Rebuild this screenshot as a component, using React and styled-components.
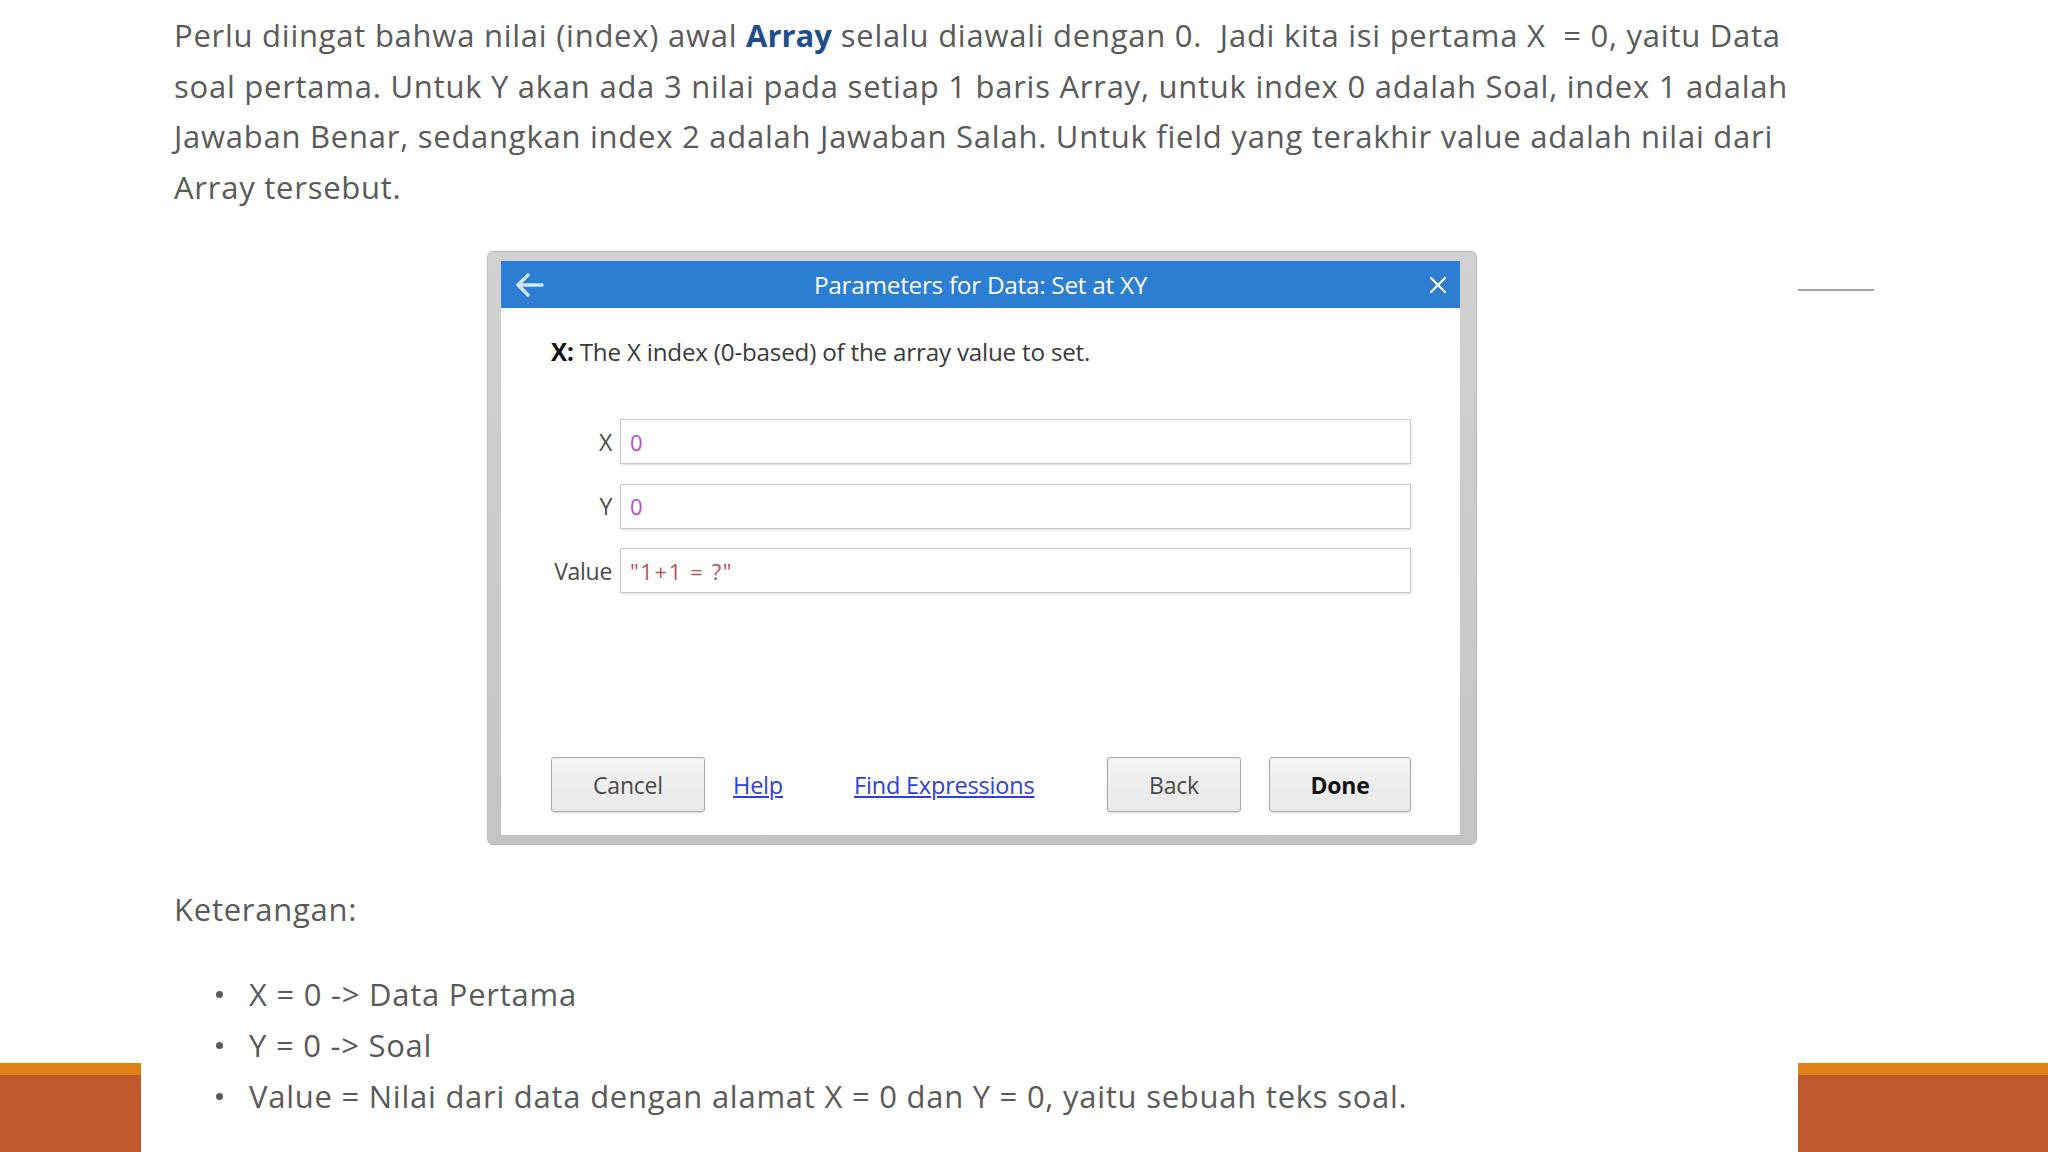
import React from "react";
import styled, { createGlobalStyle } from "styled-components";

const Global = createGlobalStyle`
  html, body { margin: 0; padding: 0; background: #ffffff; }
  * { box-sizing: border-box; }
`;

const Page = styled.div`
  position: relative;
  width: 2048px;
  height: 1152px;
  overflow: hidden;
  background: #ffffff;
  padding: 10px 0 0 174px;
  font-family: "Open Sans", "Noto Sans", sans-serif;
  color: #5a5a5a;
`;

const Paragraph = styled.p`
  margin: 0;
  font-size: 31px;
  letter-spacing: 0.75px;
  line-height: 50.5px;
  white-space: nowrap;
`;

const Strong = styled.b`
  color: #1f4f8a;
  font-weight: 700;
  letter-spacing: 0;
`;

const Frame = styled.div`
  margin: 39px 0 0 313px;
  width: 990px;
  height: 594px;
  padding: 9px 16px 9px 13px;
  background: linear-gradient(#d2d2d2, #c4c4c4);
  border: 1px solid #b8b8b8;
  border-radius: 6px;
  display: flex;
  font-family: "Open Sans", "Noto Sans", sans-serif;
`;

const Window = styled.div`
  flex: 1;
  display: flex;
  flex-direction: column;
  background: #ffffff;
`;

const TitleBar = styled.div`
  height: 47px;
  flex: none;
  background: #2b7ed1;
  display: grid;
  grid-template-columns: 60px 1fr 60px;
  align-items: center;
  color: #ffffff;
`;

const Title = styled.div`
  text-align: center;
  font-size: 24.4px;
  letter-spacing: -0.3px;
`;

const IconCell = styled.div`
  display: flex;
  justify-content: ${(p) => (p.$end ? "flex-end" : "flex-start")};
  padding: ${(p) => (p.$end ? "0 13px 0 0" : "0 0 0 15px")};
`;

const Body = styled.div`
  flex: 1;
  display: flex;
  flex-direction: column;
  padding: 28px 49px 23px 50px;
`;

const Description = styled.div`
  font-size: 24.2px;
  line-height: 32px;
  letter-spacing: -0.2px;
  color: #3a3a3a;
  b { color: #111; font-weight: 700; }
`;

const Fields = styled.div`
  margin-top: 51px;
  display: grid;
  grid-template-columns: 61px 1fr;
  column-gap: 8px;
  row-gap: 19.5px;
  align-items: center;
`;

const Label = styled.div`
  text-align: right;
  font-size: 23px;
  letter-spacing: -0.3px;
  color: #4a4a4a;
`;

const Input = styled.div`
  height: 45px;
  border: 1.5px solid #c9c9c9;
  box-shadow: 0 1px 2px rgba(0, 0, 0, 0.12);
  display: flex;
  align-items: center;
  padding-left: 9px;
  font-size: 22px;
  letter-spacing: 1.6px;
  color: ${(p) => p.$color};
`;

const Spacer = styled.div`
  flex: 1;
`;

const Actions = styled.div`
  display: flex;
  align-items: center;
`;

const Button = styled.button`
  height: 55px;
  width: ${(p) => p.$w}px;
  margin-left: ${(p) => p.$ml || "0"};
  background: linear-gradient(#f3f3f3, #e9e9e9);
  border: 1.5px solid #a9a9a9;
  border-radius: 3px;
  box-shadow: 0 1px 2px rgba(0, 0, 0, 0.15);
  font-family: "Open Sans", "Noto Sans", sans-serif;
  font-size: 23px;
  letter-spacing: -0.2px;
  font-weight: ${(p) => (p.$bold ? 700 : 400)};
  color: ${(p) => (p.$bold ? "#111" : "#4a4a4a")};
  padding: 0;
`;

const Link = styled.a`
  margin-left: ${(p) => p.$ml}px;
  font-size: 23.5px;
  letter-spacing: -0.2px;
  color: #3140d8;
  text-decoration: underline;
  cursor: pointer;
`;

const Subtitle = styled.p`
  margin: 38.5px 0 0;
  font-size: 31px;
  letter-spacing: 0.75px;
  line-height: 50.5px;
`;

const List = styled.ul`
  margin: 35px 0 0;
  padding: 0;
  list-style: none;
`;

const Item = styled.li`
  display: flex;
  align-items: center;
  font-size: 31px;
  letter-spacing: 0.75px;
  line-height: 51px;
  white-space: nowrap;
`;

const Dot = styled.span`
  width: 7px;
  height: 7px;
  border-radius: 50%;
  background: #5a5a5a;
  margin: 0 26px 0 42px;
  flex: none;
`;

const Rule = styled.div`
  position: absolute;
  left: 1798px;
  top: 289px;
  width: 76px;
  height: 2px;
  background: #a3a3a3;
`;

const Corner = styled.div`
  position: absolute;
  bottom: 0;
  ${(p) => (p.$right ? "right: 0; width: 250px;" : "left: 0; width: 141px;")}
  height: 89px;
  background: #bd592c;
  border-top: 12px solid #df8114;
`;

const BackArrow = () => (
  <svg width="28" height="24" viewBox="0 0 28 24" fill="none">
    <path d="M12 2 L2 12 L12 22 M2 12 H26" stroke="#d3e6f8" strokeWidth="3.5" strokeLinecap="round" strokeLinejoin="round" />
  </svg>
);

const CloseIcon = () => (
  <svg width="18" height="18" viewBox="0 0 18 18" fill="none">
    <path d="M2 2 L16 16 M16 2 L2 16" stroke="#ffffff" strokeWidth="2.2" strokeLinecap="round" />
  </svg>
);

export default function App() {
  return (
    <>
      <Global />
      <Page>
        <Paragraph>
          Perlu diingat bahwa nilai (index) awal <Strong>Array</Strong> selalu diawali dengan 0.&nbsp; Jadi kita isi pertama X&nbsp; = 0, yaitu Data
          <br />
          soal pertama. Untuk Y akan ada 3 nilai pada setiap 1 baris Array, untuk index 0 adalah Soal, index 1 adalah
          <br />
          Jawaban Benar, sedangkan index 2 adalah Jawaban Salah. Untuk field yang terakhir value adalah nilai dari
          <br />
          Array tersebut.
        </Paragraph>

        <Frame>
          <Window>
            <TitleBar>
              <IconCell>
                <BackArrow />
              </IconCell>
              <Title>Parameters for Data: Set at XY</Title>
              <IconCell $end>
                <CloseIcon />
              </IconCell>
            </TitleBar>
            <Body>
              <Description>
                <b>X:</b> The X index (0-based) of the array value to set.
              </Description>
              <Fields>
                <Label>X</Label>
                <Input $color="#b24fc6">0</Input>
                <Label>Y</Label>
                <Input $color="#b24fc6">0</Input>
                <Label>Value</Label>
                <Input $color="#b8505c">"1+1 = ?"</Input>
              </Fields>
              <Spacer />
              <Actions>
                <Button $w={154}>Cancel</Button>
                <Link $ml={28}>Help</Link>
                <Link $ml={71}>Find Expressions</Link>
                <Button $w={134} $ml="auto">Back</Button>
                <Button $w={142} $ml="28px" $bold>Done</Button>
              </Actions>
            </Body>
          </Window>
        </Frame>

        <Subtitle>Keterangan:</Subtitle>
        <List>
          <Item><Dot />X = 0 -&gt; Data Pertama</Item>
          <Item><Dot />Y = 0 -&gt; Soal</Item>
          <Item><Dot />Value = Nilai dari data dengan alamat X = 0 dan Y = 0, yaitu sebuah teks soal.</Item>
        </List>

        <Rule />
        <Corner />
        <Corner $right />
      </Page>
    </>
  );
}
